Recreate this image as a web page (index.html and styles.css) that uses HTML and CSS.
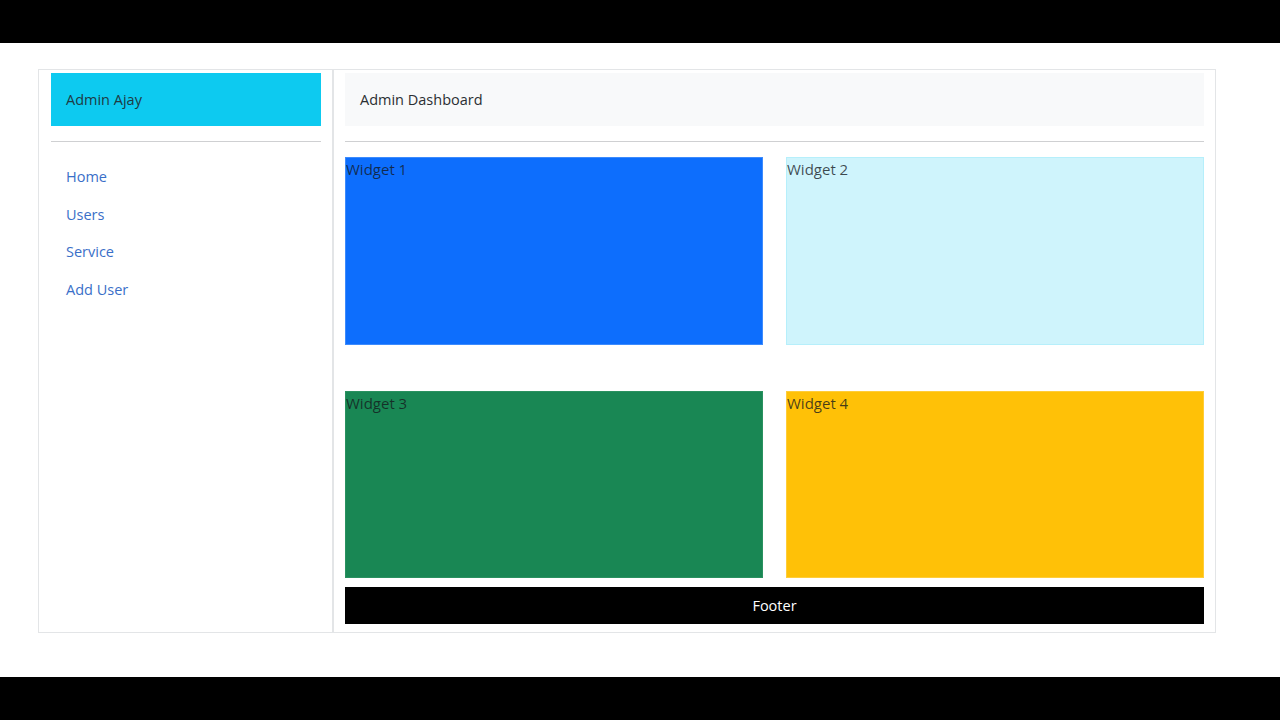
FILE: index.html
```html
<!DOCTYPE html>
<html lang="en">
<head>
<meta charset="utf-8">
<title>Admin Dashboard</title>
<link rel="stylesheet" href="styles.css">
</head>
<body>
<div class="bar"></div>
<div class="stage">
  <div class="frame">
    <aside class="sidebar">
      <div class="brand">Admin Ajay</div>
      <hr class="rule">
      <nav class="nav">
        <a class="nav-link" href="#">Home</a>
        <a class="nav-link" href="#">Users</a>
        <a class="nav-link" href="#">Service</a>
        <a class="nav-link" href="#">Add User</a>
      </nav>
    </aside>
    <main class="main">
      <div class="topbar">Admin Dashboard</div>
      <hr class="rule">
      <div class="grid">
        <div class="widget w-blue">Widget 1</div>
        <div class="widget w-cyan">Widget 2</div>
        <div class="widget w-green">Widget 3</div>
        <div class="widget w-yellow">Widget 4</div>
      </div>
      <footer class="footer">Footer</footer>
    </main>
  </div>
</div>
<div class="bar"></div>
</body>
</html>
```
FILE: styles.css
```css
* { box-sizing: border-box; }
html, body { margin: 0; padding: 0; }
body {
  background: #fff;
  font-family: "Open Sans", "Noto Sans", sans-serif;
  font-size: 14.5px;
  color: #212529;
}
.bar { height: 43px; background: #000; }
.stage {
  height: 634px;
  padding: 26px 0 0 38px;
}
.frame {
  display: flex;
  width: 1178px;
  height: 564px;
  border: 1px solid #e3e5e7;
}
.sidebar {
  width: 295px;
  padding: 3px 11px 0 12px;
  border-right: 2px solid #e3e5e7;
}
.brand {
  height: 53px;
  background: #0dcaf0;
  padding-left: 15px;
  display: flex;
  align-items: center;
  color: #1f3a44;
}
.rule {
  margin: 15px 0;
  border: 0;
  border-top: 1px solid #cfd0d2;
  height: 0;
}
.nav {
  display: flex;
  flex-direction: column;
  padding-top: 9px;
}
.nav-link {
  display: block;
  padding: 0 15px;
  height: 37.7px;
  line-height: 22px;
  color: #3a6fc8;
  text-decoration: none;
}
.main {
  flex: 1;
  padding: 3px 11px 0 11px;
  display: flex;
  flex-direction: column;
}
.topbar {
  height: 53px;
  background: #f8f9fa;
  padding-left: 15px;
  display: flex;
  align-items: center;
  color: #2b2f33;
}
.grid {
  display: grid;
  grid-template-columns: 418px 418px;
  grid-template-rows: 188px 187px;
  column-gap: 23px;
  row-gap: 46px;
}
.widget {
  font-size: 15px;
  line-height: 22px;
  color: rgba(20, 24, 28, 0.78);
}
.w-blue { background: #0d6efd; border: 1px solid #3d8bfd; }
.w-cyan { background: #cff4fc; border: 1px solid #b6effb; }
.w-green { background: #198754; border: 1px solid #2a9160; }
.w-yellow { background: #ffc107; border: 1px solid #ffcd39; }
.footer {
  margin-top: 9px;
  height: 37px;
  background: #000;
  color: #fff;
  display: flex;
  align-items: center;
  justify-content: center;
}
```
